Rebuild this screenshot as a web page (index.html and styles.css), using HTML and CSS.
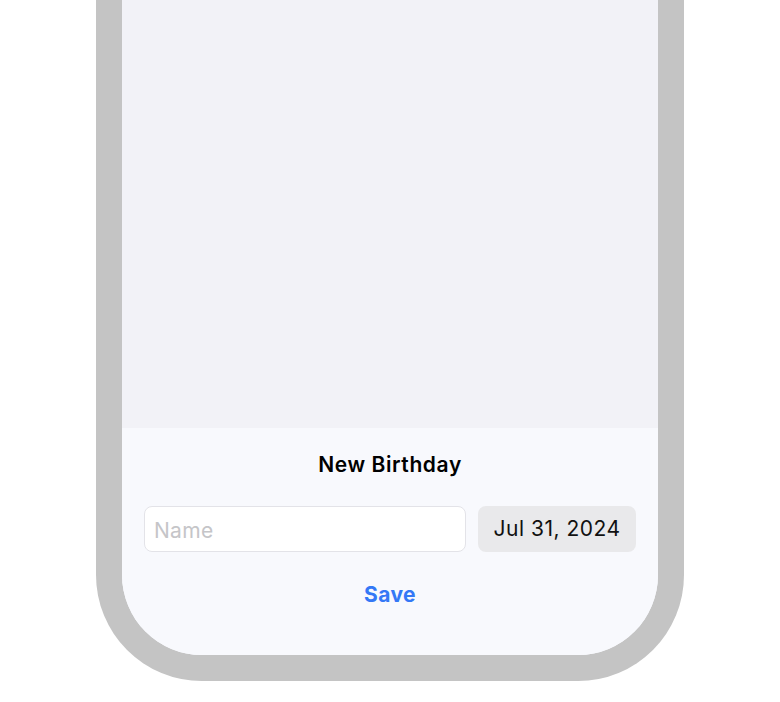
FILE: index.html
```html
<!DOCTYPE html>
<html>
<head>
<meta charset="utf-8">
<link rel="stylesheet" href="styles.css">
</head>
<body>
<div class="stage">
  <div class="phone">
    <div class="screen">
      <div class="content"></div>
      <div class="sheet">
        <div class="title">New Birthday</div>
        <div class="row">
          <div class="field"><span class="placeholder">Name</span></div>
          <div class="date">Jul 31, 2024</div>
        </div>
        <div class="save">Save</div>
      </div>
    </div>
  </div>
</div>
</body>
</html>
```
FILE: styles.css
```css
html, body {
  margin: 0;
  padding: 0;
  background: #ffffff;
  font-family: Inter, "Noto Sans", "Liberation Sans", sans-serif;
}
.stage {
  width: 780px;
  height: 702px;
  display: flex;
  justify-content: center;
}
.phone {
  width: 588px;
  height: 681px;
  box-sizing: border-box;
  background: #c4c4c4;
  padding: 0 26px 26px 26px;
  border-radius: 0 0 106px 106px;
}
.screen {
  height: 100%;
  display: flex;
  flex-direction: column;
  border-radius: 0 0 80px 80px;
  overflow: hidden;
  background: #f8f9fd;
}
.content {
  height: 428px;
  background: #f2f2f7;
  flex: none;
}
.sheet {
  flex: 1;
  background: #f8f9fd;
  display: flex;
  flex-direction: column;
  padding: 23px 22px 0 22px;
}
.title {
  text-align: center;
  font-size: 21px;
  font-weight: 600;
  letter-spacing: 0.6px;
  color: #000;
  line-height: 28px;
  height: 28px;
}
.row {
  margin-top: 27px;
  display: flex;
  gap: 12px;
  height: 46px;
}
.field {
  flex: 1;
  box-sizing: border-box;
  background: #fff;
  border: 1px solid #e3e3e8;
  border-radius: 8px;
  display: flex;
  align-items: center;
  padding-left: 9px;
  padding-top: 3px;
}
.placeholder {
  font-size: 21px;
  letter-spacing: 0.3px;
  color: #c5c5c8;
}
.date {
  width: 158px;
  box-sizing: border-box;
  background: #e9e9eb;
  border-radius: 8px;
  display: flex;
  align-items: center;
  justify-content: center;
  font-size: 21px;
  letter-spacing: 0.5px;
  color: #111;
  padding-bottom: 2px;
}
.save {
  margin-top: 29px;
  text-align: center;
  font-size: 21px;
  font-weight: 700;
  letter-spacing: 0.4px;
  color: #3478f6;
  line-height: 28px;
}
```
